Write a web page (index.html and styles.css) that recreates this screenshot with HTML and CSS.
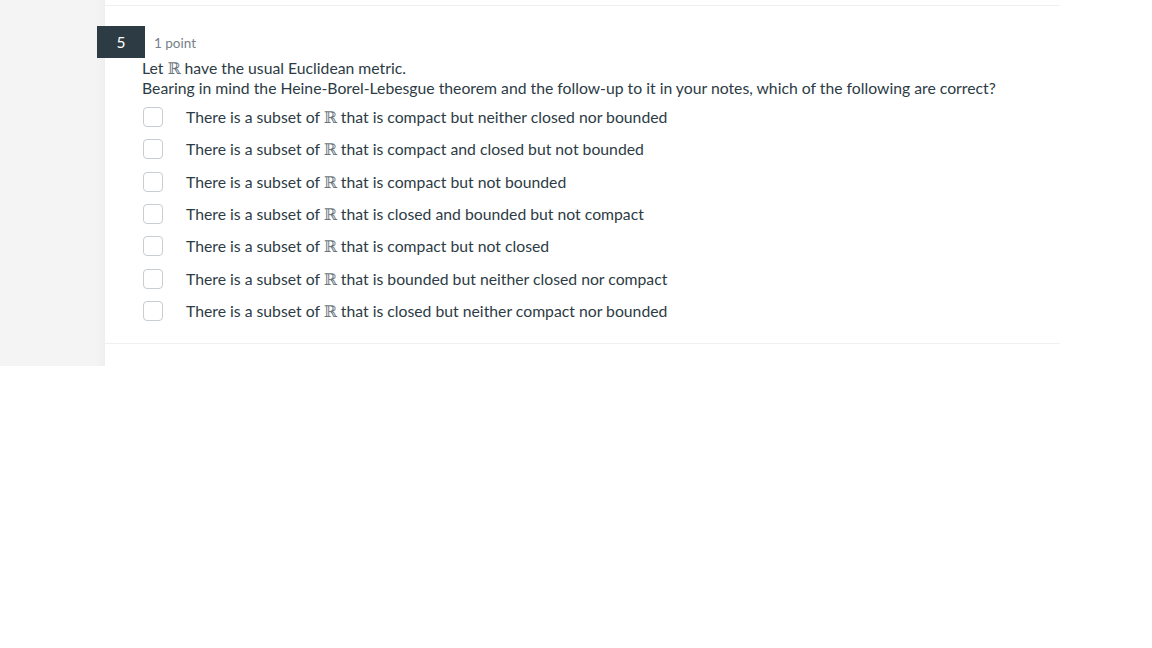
FILE: index.html
```html
<!DOCTYPE html>
<html>
<head>
<meta charset="utf-8">
<link rel="stylesheet" href="styles.css">
</head>
<body>
<div class="page">
  <aside class="sidebar"></aside>
  <main class="main">
    <div class="prev-end"></div>
    <section class="question">
      <div class="q-header">
        <div class="q-num">5</div>
        <div class="q-points">1 point</div>
      </div>
      <div class="q-text">
        <div>Let <span class="bb">ℝ</span> have the usual Euclidean metric.</div>
        <div>Bearing in mind the Heine-Borel-Lebesgue theorem and the follow-up to it in your notes, which of the following are correct?</div>
      </div>
      <ul class="options">
        <li class="option"><span class="box"></span><span class="label">There is a subset of <span class="bb">ℝ</span> that is compact but neither closed nor bounded</span></li>
        <li class="option"><span class="box"></span><span class="label">There is a subset of <span class="bb">ℝ</span> that is compact and closed but not bounded</span></li>
        <li class="option"><span class="box"></span><span class="label">There is a subset of <span class="bb">ℝ</span> that is compact but not bounded</span></li>
        <li class="option"><span class="box"></span><span class="label">There is a subset of <span class="bb">ℝ</span> that is closed and bounded but not compact</span></li>
        <li class="option"><span class="box"></span><span class="label">There is a subset of <span class="bb">ℝ</span> that is compact but not closed</span></li>
        <li class="option"><span class="box"></span><span class="label">There is a subset of <span class="bb">ℝ</span> that is bounded but neither closed nor compact</span></li>
        <li class="option"><span class="box"></span><span class="label">There is a subset of <span class="bb">ℝ</span> that is closed but neither compact nor bounded</span></li>
      </ul>
    </section>
  </main>
</div>
</body>
</html>
```

FILE: styles.css
```css
html, body {
  margin: 0;
  padding: 0;
  background: #ffffff;
}
body {
  font-family: Lato, "Liberation Sans", sans-serif;
  color: #2d3b45;
}
.page {
  display: flex;
  align-items: flex-start;
}
.sidebar {
  width: 105px;
  height: 366px;
  flex: none;
  background: linear-gradient(to right, #f4f4f4 0, #f4f4f4 96px, #efefef 105px);
}
.main {
  width: 955px;
  flex: none;
  padding-top: 5px;
}
.prev-end {
  height: 0;
  border-top: 1px solid #f0f0f0;
}
.question {
  padding-top: 20px;
  padding-bottom: 16px;
  border-bottom: 1px solid #f0f0f0;
}
.q-header {
  display: flex;
  align-items: center;
  margin-left: -8px;
  height: 32px;
}
.q-num {
  width: 48px;
  height: 32px;
  background: #2d3b45;
  color: #ffffff;
  font-size: 15.5px;
  display: flex;
  align-items: center;
  justify-content: center;
}
.q-points {
  margin-left: 9px;
  font-size: 13.5px;
  color: #76818a;
  padding-top: 2px;
}
.q-text {
  margin-top: 0;
  padding-left: 37px;
  font-size: 15.75px;
  line-height: 19px;
}
.bb {
  font-family: "DejaVu Serif", serif;
  color: #6a747b;
  font-weight: 300;
}
.options {
  list-style: none;
  margin: 4px 0 0 0;
  padding: 0 0 0 38px;
}
.option {
  display: flex;
  align-items: center;
  height: 32.33px;
  font-size: 15.75px;
}
.box {
  width: 18px;
  height: 18px;
  border: 1px solid #c7cdd1;
  border-radius: 4px;
  background: #fff;
  flex: none;
}
.label {
  margin-left: 23px;
}
```
